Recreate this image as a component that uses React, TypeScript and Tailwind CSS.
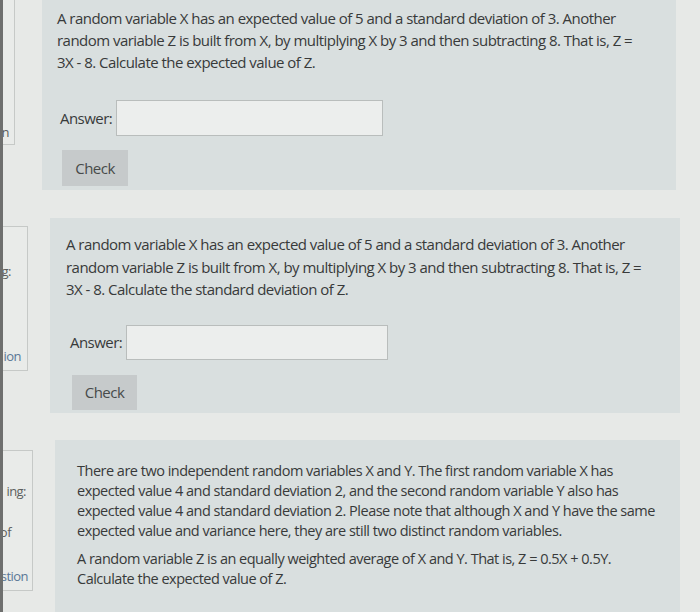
import React from "react";

type Label = { text: string; top: number; right: number; blue?: boolean };

type SideBox = { top: number; height: number; width: number; labels: Label[] };

const SIDE_BOXES: SideBox[] = [
  { top: -2, height: 147, width: 12, labels: [{ text: "n", top: 124, right: 5 }] },
  {
    top: 81,
    height: 145,
    width: 25,
    labels: [
      { text: "g:", top: 35, right: 16 },
      { text: "ion", top: 120, right: 6, blue: true },
    ],
  },
  {
    top: 79,
    height: 141,
    width: 30,
    labels: [
      { text: "ing:", top: 31, right: 6 },
      { text: "of", top: 72, right: 21 },
      { text: "estion", top: 116, right: 4, blue: true },
    ],
  },
];

function Sidebar() {
  return (
    <div className="w-[37px] shrink-0 flex flex-col overflow-hidden">
      {SIDE_BOXES.map((box, i) => (
        <div
          key={i}
          className="relative shrink-0 border border-l-0 border-[#c6c9c7] bg-[#e9ebe9]"
          style={{ marginTop: box.top, height: box.height, width: box.width }}
        >
          {box.labels.map((l) => (
            <span
              key={l.text}
              className={`absolute whitespace-nowrap text-[13px] leading-[18px] ${
                l.blue ? "text-[#5a7796]" : "text-[#5c5e5d]"
              }`}
              style={{ top: l.top, right: l.right }}
            >
              {l.text}
            </span>
          ))}
        </div>
      ))}
    </div>
  );
}

function AnswerBlock({
  labelPad,
  inputWidth,
  inputHeight,
  gapTop,
  checkGap,
  checkPad,
  checkWidth,
  checkHeight,
}: {
  labelPad: number;
  inputWidth: number;
  inputHeight: number;
  gapTop: number;
  checkGap: number;
  checkPad: number;
  checkWidth: number;
  checkHeight: number;
}) {
  return (
    <>
      <div className="flex items-center" style={{ marginTop: gapTop, paddingLeft: labelPad }}>
        <span className="w-[56px] shrink-0">Answer:</span>
        <div
          className="border border-[#b9bdbc] bg-[#eceeed]"
          style={{ width: inputWidth, height: inputHeight }}
        />
      </div>
      <button
        type="button"
        className="flex items-center justify-center bg-[#c6cacb] text-[#474a4a]"
        style={{ marginTop: checkGap, marginLeft: checkPad, width: checkWidth, height: checkHeight }}
      >
        Check
      </button>
    </>
  );
}

export default function App() {
  return (
    <div className="w-[700px] h-[612px] overflow-hidden flex bg-[#e7e9e7] border-l-[3px] border-[#6e6f6e] font-['Open_Sans',sans-serif] text-[15px] tracking-[-0.53px] text-[#383a3a]">
      <Sidebar />

      <main className="flex flex-col flex-1">
        <section className="ml-[2px] w-[634px] bg-[#d9dfdf] pt-[7px] pb-[4px] pl-[15px]">
          <p className="leading-[22px] whitespace-nowrap">
            A random variable X has an expected value of 5 and a standard deviation of 3. Another
            <br />
            random variable Z is built from X, by multiplying X by 3 and then subtracting 8. That is, Z =
            <br />
            3X - 8. Calculate the expected value of Z.
          </p>
          <AnswerBlock
            labelPad={3}
            inputWidth={267}
            inputHeight={36}
            gapTop={27}
            checkGap={14}
            checkPad={5}
            checkWidth={66}
            checkHeight={36}
          />
        </section>

        <section className="mt-[28px] ml-[10px] w-[630px] bg-[#d9dfdf] pt-[15px] pb-[3px] pl-[16px]">
          <p className="leading-[22.5px] whitespace-nowrap">
            A random variable X has an expected value of 5 and a standard deviation of 3. Another
            <br />
            random variable Z is built from X, by multiplying X by 3 and then subtracting 8. That is, Z =
            <br />
            3X - 8. Calculate the standard deviation of Z.
          </p>
          <AnswerBlock
            labelPad={4}
            inputWidth={262}
            inputHeight={35}
            gapTop={24}
            checkGap={15}
            checkPad={6}
            checkWidth={65}
            checkHeight={35}
          />
        </section>

        <section className="mt-[27px] ml-[15px] w-[625px] flex-1 bg-[#d9dfdf] pt-[21px] pl-[22px] whitespace-nowrap text-[14.5px] tracking-[-0.5px]">
          <p className="leading-[20px]">
            There are two independent random variables X and Y. The first random variable X has
            <br />
            expected value 4 and standard deviation 2, and the second random variable Y also has
            <br />
            expected value 4 and standard deviation 2. Please note that although X and Y have the same
            <br />
            expected value and variance here, they are still two distinct random variables.
          </p>
          <p className="mt-[8px] leading-[20px]">
            A random variable Z is an equally weighted average of X and Y. That is, Z = 0.5X + 0.5Y.
            <br />
            Calculate the expected value of Z.
          </p>
        </section>
      </main>
    </div>
  );
}
